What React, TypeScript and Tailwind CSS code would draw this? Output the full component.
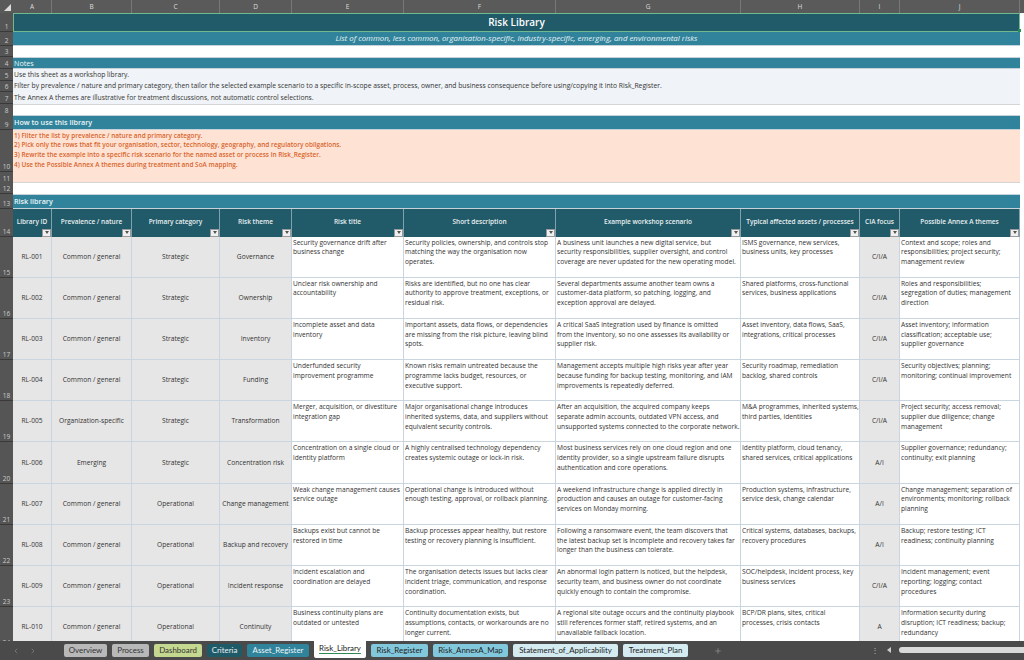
import React from 'react'
import { ChevronLeft, ChevronRight, Plus } from 'lucide-react'

const columns = [
  { key: 'A', width: 'w-[39px]' },
  { key: 'B', width: 'w-[80px]' },
  { key: 'C', width: 'w-[88px]' },
  { key: 'D', width: 'w-[72px]' },
  { key: 'E', width: 'w-[112px]' },
  { key: 'F', width: 'w-[152px]' },
  { key: 'G', width: 'w-[185px]' },
  { key: 'H', width: 'w-[119px]' },
  { key: 'I', width: 'w-[40px]' },
  { key: 'J', width: 'w-[120px]' },
]

const headers = [
  'Library ID',
  'Prevalence / nature',
  'Primary category',
  'Risk theme',
  'Risk title',
  'Short description',
  'Example workshop scenario',
  'Typical affected assets / processes',
  'CIA focus',
  'Possible Annex A themes',
]

// a few cells carry a hard line break so they wrap where the sheet wraps them
const risks = [
  ['RL-001', 'Common / general', 'Strategic', 'Governance', 'Security governance drift after business change', 'Security policies, ownership, and controls stop matching the way the organisation now operates.', 'A business unit launches a new digital service, but\nsecurity responsibilities, supplier oversight, and control coverage are never updated for the new operating model.', 'ISMS governance, new services, business units, key processes', 'C/I/A', 'Context and scope; roles and responsibilities; project security; management review'],
  ['RL-002', 'Common / general', 'Strategic', 'Ownership', 'Unclear risk ownership and accountability', 'Risks are identified, but no one has clear authority to approve treatment, exceptions, or residual risk.', 'Several departments assume another team owns a customer-data platform, so patching, logging, and exception approval are delayed.', 'Shared platforms, cross-functional services, business applications', 'C/I/A', 'Roles and responsibilities; segregation of duties; management direction'],
  ['RL-003', 'Common / general', 'Strategic', 'Inventory', 'Incomplete asset and data inventory', 'Important assets, data flows, or dependencies are missing from the risk picture, leaving blind spots.', 'A critical SaaS integration used by finance is omitted\nfrom the inventory, so no one assesses its availability or\nsupplier risk.', 'Asset inventory, data flows, SaaS, integrations, critical processes', 'C/I/A', 'Asset inventory; information classification; acceptable use; supplier governance'],
  ['RL-004', 'Common / general', 'Strategic', 'Funding', 'Underfunded security improvement programme', 'Known risks remain untreated because the programme lacks budget, resources, or executive support.', 'Management accepts multiple high risks year after year because funding for backup testing, monitoring, and IAM improvements is repeatedly deferred.', 'Security roadmap, remediation backlog, shared controls', 'C/I/A', 'Security objectives; planning; monitoring; continual improvement'],
  ['RL-005', 'Organization-specific', 'Strategic', 'Transformation', 'Merger, acquisition, or divestiture integration gap', 'Major organisational change introduces inherited systems, data, and suppliers without equivalent security controls.', 'After an acquisition, the acquired company keeps\nseparate admin accounts, outdated VPN access, and\nunsupported systems connected to the corporate network.', 'M&A programmes, inherited systems, third parties, identities', 'C/I/A', 'Project security; access removal; supplier due diligence; change management'],
  ['RL-006', 'Emerging', 'Strategic', 'Concentration risk', 'Concentration on a single cloud or identity platform', 'A highly centralised technology dependency creates systemic outage or lock-in risk.', 'Most business services rely on one cloud region and one identity provider, so a single upstream failure disrupts authentication and core operations.', 'Identity platform, cloud tenancy, shared services, critical applications', 'A/I', 'Supplier governance; redundancy; continuity; exit planning'],
  ['RL-007', 'Common / general', 'Operational', 'Change management', 'Weak change management causes service outage', 'Operational change is introduced without enough testing, approval, or rollback planning.', 'A weekend infrastructure change is applied directly in production and causes an outage for customer-facing services on Monday morning.', 'Production systems, infrastructure, service desk, change calendar', 'A/I', 'Change management; separation of environments; monitoring; rollback planning'],
  ['RL-008', 'Common / general', 'Operational', 'Backup and recovery', 'Backups exist but cannot be restored in time', 'Backup processes appear healthy, but restore testing or recovery planning is insufficient.', 'Following a ransomware event, the team discovers that\nthe latest backup set is incomplete and recovery takes far\nlonger than the business can tolerate.', 'Critical systems, databases, backups, recovery procedures', 'A/I', 'Backup; restore testing; ICT readiness; continuity planning'],
  ['RL-009', 'Common / general', 'Operational', 'Incident response', 'Incident escalation and coordination are delayed', 'The organisation detects issues but lacks clear incident triage, communication, and response coordination.', 'An abnormal login pattern is noticed, but the helpdesk, security team, and business owner do not coordinate quickly enough to contain the compromise.', 'SOC/helpdesk, incident process, key business services', 'C/I/A', 'Incident management; event reporting; logging; contact procedures'],
  ['RL-010', 'Common / general', 'Operational', 'Continuity', 'Business continuity plans are outdated or untested', 'Continuity documentation exists, but assumptions, contacts, or workarounds are no longer current.', 'A regional site outage occurs and the continuity playbook still references former staff, retired systems, and an unavailable fallback location.', 'BCP/DR plans, sites, critical\nprocesses, crisis contacts', 'A', 'Information security during disruption; ICT readiness; backup; redundancy'],
]

const tabs = [
  { name: 'Overview', cls: 'bg-[#b8b8b8] text-[#333]', w: 'w-[43px]' },
  { name: 'Process', cls: 'bg-[#b8b8b8] text-[#333]', w: 'w-[37px]' },
  { name: 'Dashboard', cls: 'bg-[#c5d88f] text-[#333]', w: 'w-[48px]' },
  { name: 'Criteria', cls: 'bg-[#1f5a68] text-[#e8f0f2]', w: 'w-[35px]' },
  { name: 'Asset_Register', cls: 'bg-[#2f839b] text-[#eef6f8]', w: 'w-[62px]' },
]

const tabsAfter = [
  { name: 'Risk_Register', cls: 'bg-[#82c8dc] text-[#222]', w: 'w-[57px]' },
  { name: 'Risk_AnnexA_Map', cls: 'bg-[#82c8dc] text-[#222]', w: 'w-[75px]' },
  { name: 'Statement_of_Applicability', cls: 'bg-[#d4ebf2] text-[#222]', w: 'w-[105px]' },
  { name: 'Treatment_Plan', cls: 'bg-[#d4ebf2] text-[#222]', w: 'w-[65px]' },
]

// one row of the sheet: the grey number gutter plus whatever the row holds
function SheetRow({ n, h, children }: { n: string; h: string; children?: React.ReactNode }) {
  return (
    <div className={`flex shrink-0 ${h}`}>
      <div className="flex w-[13px] shrink-0 items-end justify-center border-b border-[#3a3a3a] bg-[#555] text-[6.5px] leading-[9px] text-[#ccc]">
        {n}
      </div>
      <div className="min-w-0 w-[1007px]">{children}</div>
      <div className="w-[4px] shrink-0 bg-white" />
    </div>
  )
}

function Band({ children }: { children: React.ReactNode }) {
  return (
    <div className="flex h-full items-center border-y border-[#c6d2da] bg-[#30839b] pl-[1px] text-[7.2px] font-semibold text-[#eef6f8]">
      {children}
    </div>
  )
}

function FilterButton() {
  return (
    <div className="absolute right-0 bottom-0 flex h-[8px] w-[9px] items-center justify-center border border-[#999] bg-[#f0f0f0]">
      <div className="h-0 w-0 border-x-[2.5px] border-t-[3px] border-x-transparent border-t-[#555]" />
    </div>
  )
}

export default function App() {
  return (
    <div className="relative flex h-[660px] w-[1024px] flex-col overflow-hidden bg-white font-['Open_Sans',sans-serif]">
      {/* Column letters */}
      <div className="flex h-[13px] shrink-0 bg-[#5a5a5a] text-[6.5px] text-[#ddd]">
        <div className="relative w-[13px] shrink-0">
          <div className="absolute right-[2px] bottom-[2px] h-0 w-0 border-b-[7px] border-l-[7px] border-b-[#ddd] border-l-transparent" />
        </div>
        {columns.map((c) => (
          <div key={c.key} className={`flex items-center justify-center border-r border-[#777] ${c.width}`}>
            {c.key}
          </div>
        ))}
      </div>

      {/* Sheet */}
      <div className="min-h-0 flex-1 overflow-hidden">
        <SheetRow n="1" h="h-[19px]">
          <div className="flex h-full items-center justify-center border border-[#6fb98f] bg-[#215a68] text-[10px] font-semibold text-white">
            Risk Library
          </div>
        </SheetRow>
        <SheetRow n="2" h="h-[14px]">
          <div className="flex h-full items-center justify-center border-b border-[#c6d2da] bg-[#30839b] text-[7.85px] italic text-[#e6f2f5]">
            List of common, less common, organisation-specific, industry-specific, emerging, and environmental risks
          </div>
        </SheetRow>
        <SheetRow n="3" h="h-[11px]" />
        <SheetRow n="4" h="h-[12px]">
          <Band>
            <span className="font-normal">Notes</span>
          </Band>
        </SheetRow>
        {[
          ['5', 'Use this sheet as a workshop library.'],
          ['6', 'Filter by prevalence / nature and primary category, then tailor the selected example scenario to a specific in-scope asset, process, owner, and business consequence before using/copying it into Risk_Register.'],
          ['7', 'The Annex A themes are illustrative for treatment discussions, not automatic control selections.'],
        ].map(([n, text]) => (
          <SheetRow key={n} n={n} h="h-[11.5px]">
            <div className="flex h-full items-center whitespace-nowrap bg-[#f0f4f8] pl-[1px] text-[6.75px] text-[#333]">{text}</div>
          </SheetRow>
        ))}
        <div className="flex h-[11px]">
          <div className="flex w-[13px] items-end justify-center bg-[#555] text-[6.5px] leading-[9px] text-[#ccc]">8</div>
          <div className="w-[1007px] border-t border-[#d5d5d5]" />
        </div>
        <SheetRow n="9" h="h-[15px]">
          <Band>How to use this library</Band>
        </SheetRow>
        <div className="flex h-[53px]">
          <div className="flex w-[13px] shrink-0 flex-col bg-[#555] text-center text-[6.5px] leading-[9px] text-[#ccc]">
            <div className="flex flex-1 items-end justify-center border-b border-[#3a3a3a]">10</div>
            <div className="flex h-[11px] items-end justify-center">11</div>
          </div>
          <div className="w-[1007px] border-b border-[#d5d5d5] bg-[#fee3d5] pt-[1px] pl-[1px] text-[6.45px] leading-[9.7px] font-semibold text-[#d9642a]">
            <p>1) Filter the list by prevalence / nature and primary category.</p>
            <p>2) Pick only the rows that fit your organisation, sector, technology, geography, and regulatory obligations.</p>
            <p>3) Rewrite the example into a specific risk scenario for the named asset or process in Risk_Register.</p>
            <p>4) Use the Possible Annex A themes during treatment and SoA mapping.</p>
          </div>
        </div>
        <SheetRow n="12" h="h-[11px]" />
        <SheetRow n="13" h="h-[15px]">
          <Band>Risk library</Band>
        </SheetRow>
        <SheetRow n="14" h="h-[28px]">
          <div className="flex h-full">
            {headers.map((h, i) => (
              <div
                key={h}
                className={`relative flex h-full items-center justify-center border-r border-[#7fa3ae] bg-[#215a68] pb-[1px] text-center text-[6.5px] font-semibold whitespace-nowrap text-[#e8f0f2] ${columns[i].width}`}
              >
                {h}
                <FilterButton />
              </div>
            ))}
          </div>
        </SheetRow>
        {risks.map((row, r) => (
          <SheetRow key={row[0]} n={String(r + 15)} h="h-[41.2px]">
            <div className="flex h-full">
              {row.map((cell, i) => {
                const shaded = i < 4 || i === 8
                return (
                  <div
                    key={i}
                    className={`border-r border-b border-[#c9d6e0] text-[6.65px] leading-[9.8px] whitespace-pre-line text-[#333] ${columns[i].width} ${
                      shaded
                        ? 'flex items-center justify-center bg-[#e6e6e6] text-center'
                        : `bg-white pt-[1px] pl-[1px] ${i === 9 ? 'pr-[2px]' : i === 7 || i === 6 ? 'pr-0' : 'pr-[1px]'}`
                    }`}
                  >
                    {cell}
                  </div>
                )
              })}
            </div>
          </SheetRow>
        ))}
      </div>

      {/* Selection handle on the title cell */}
      <div className="absolute top-[29px] left-[1018px] h-[3px] w-[3px] bg-[#2d8a57]" />

      {/* Sheet tabs */}
      <div className="flex h-[19px] shrink-0 items-center bg-[#4a4a4a] font-['Lato',sans-serif] text-[7.9px]">
        <div className="flex w-[64px] shrink-0 items-center gap-[9px] pl-[12px] text-[#888]">
          <ChevronLeft size={8} />
          <ChevronRight size={8} />
        </div>
        <div className="flex items-center gap-[5px]">
          {tabs.map((t) => (
            <div key={t.name} className={`flex h-[13px] items-center justify-center rounded-[2px] whitespace-nowrap ${t.cls} ${t.w}`}>
              {t.name}
            </div>
          ))}
        </div>
        <div className="mx-[5px] -mt-[3px] flex h-[18px] w-[52px] items-center justify-center rounded-b-[2px] bg-white whitespace-nowrap text-[#222] underline decoration-[#2d8a57] underline-offset-2">
          Risk_Library
        </div>
        <div className="flex items-center gap-[5px]">
          {tabsAfter.map((t) => (
            <div key={t.name} className={`flex h-[13px] items-center justify-center rounded-[2px] whitespace-nowrap ${t.cls} ${t.w}`}>
              {t.name}
            </div>
          ))}
        </div>
        <Plus size={8} className="ml-[26px] text-[#999]" />
        <div className="ml-auto flex items-center gap-[8px] pr-0">
          <span className="text-[#bbb]">⋮</span>
          <div className="h-0 w-0 border-y-[3px] border-r-[4px] border-y-transparent border-r-[#ccc]" />
          <div className="h-[6px] w-[125px] rounded-l-[3px] bg-[#d9d9d9]" />
        </div>
      </div>
    </div>
  )
}
